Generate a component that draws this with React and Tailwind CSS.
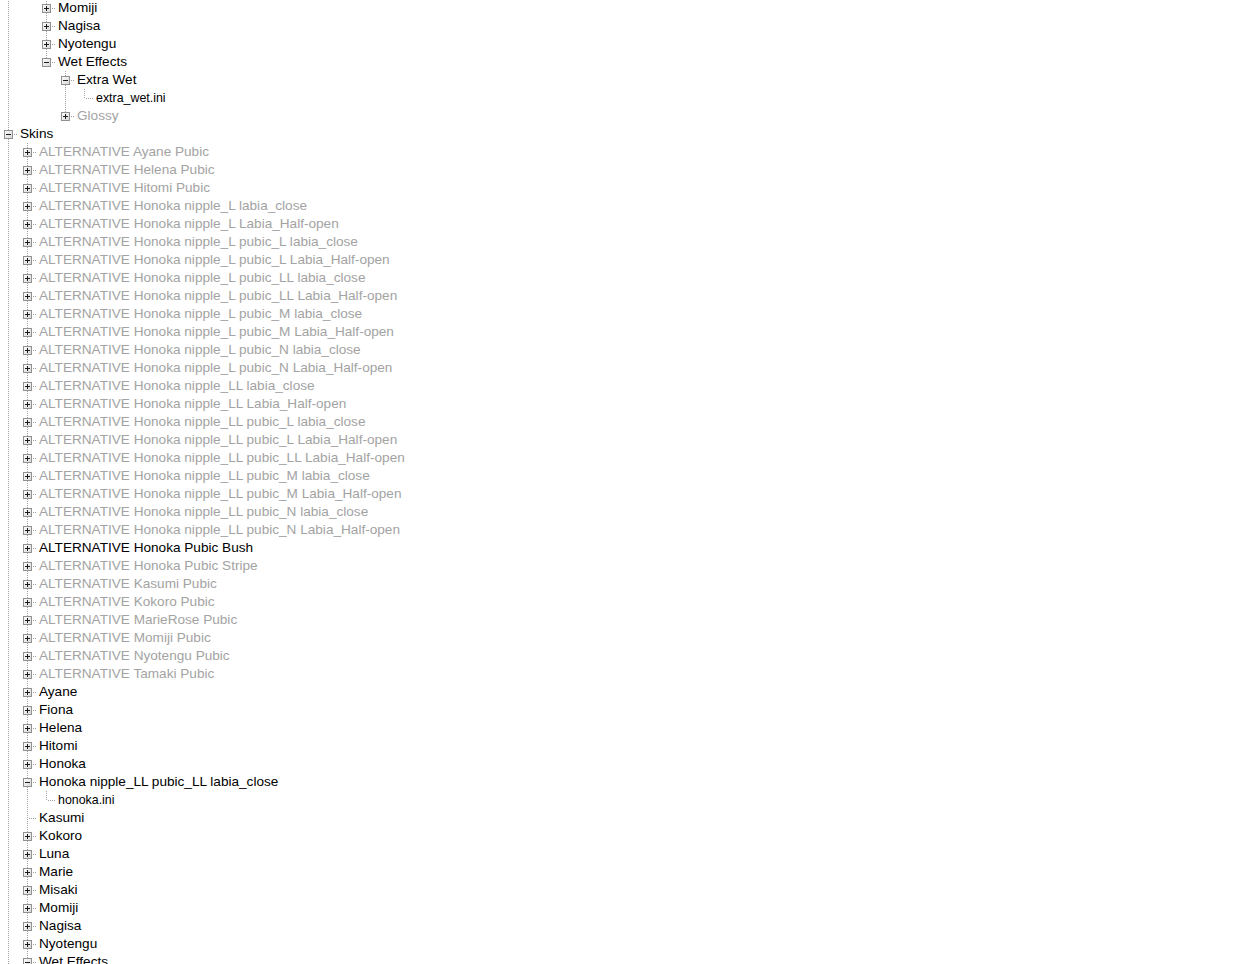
import React from "react";

const P = (l, b, t, g = false, ini = false, hidden = false) => ({ l, b, t, g, ini, hidden });

const alt = [
  "Ayane Pubic",
  "Helena Pubic",
  "Hitomi Pubic",
  "Honoka nipple_L labia_close",
  "Honoka nipple_L Labia_Half-open",
  "Honoka nipple_L pubic_L labia_close",
  "Honoka nipple_L pubic_L Labia_Half-open",
  "Honoka nipple_L pubic_LL labia_close",
  "Honoka nipple_L pubic_LL Labia_Half-open",
  "Honoka nipple_L pubic_M labia_close",
  "Honoka nipple_L pubic_M Labia_Half-open",
  "Honoka nipple_L pubic_N labia_close",
  "Honoka nipple_L pubic_N Labia_Half-open",
  "Honoka nipple_LL labia_close",
  "Honoka nipple_LL Labia_Half-open",
  "Honoka nipple_LL pubic_L labia_close",
  "Honoka nipple_LL pubic_L Labia_Half-open",
  "Honoka nipple_LL pubic_LL Labia_Half-open",
  "Honoka nipple_LL pubic_M labia_close",
  "Honoka nipple_LL pubic_M Labia_Half-open",
  "Honoka nipple_LL pubic_N labia_close",
  "Honoka nipple_LL pubic_N Labia_Half-open",
];

const rows = [
  P(0, null, "", false, false, true),
  P(1, null, "", false, false, true),
  P(2, null, "", false, false, true),
  P(2, "+", "Momiji"),
  P(2, "+", "Nagisa"),
  P(2, "+", "Nyotengu"),
  P(2, "-", "Wet Effects"),
  P(3, "-", "Extra Wet"),
  P(4, null, "extra_wet.ini", false, true),
  P(3, "+", "Glossy", true),
  P(0, "-", "Skins"),
  ...alt.map((a) => P(1, "+", "ALTERNATIVE " + a, true)),
  P(1, "+", "ALTERNATIVE Honoka Pubic Bush"),
  P(1, "+", "ALTERNATIVE Honoka Pubic Stripe", true),
  P(1, "+", "ALTERNATIVE Kasumi Pubic", true),
  P(1, "+", "ALTERNATIVE Kokoro Pubic", true),
  P(1, "+", "ALTERNATIVE MarieRose Pubic", true),
  P(1, "+", "ALTERNATIVE Momiji Pubic", true),
  P(1, "+", "ALTERNATIVE Nyotengu Pubic", true),
  P(1, "+", "ALTERNATIVE Tamaki Pubic", true),
  P(1, "+", "Ayane"),
  P(1, "+", "Fiona"),
  P(1, "+", "Helena"),
  P(1, "+", "Hitomi"),
  P(1, "+", "Honoka"),
  P(1, "-", "Honoka nipple_LL pubic_LL labia_close"),
  P(2, null, "honoka.ini", false, true),
  P(1, null, "Kasumi"),
  P(1, "+", "Kokoro"),
  P(1, "+", "Luna"),
  P(1, "+", "Marie"),
  P(1, "+", "Misaki"),
  P(1, "+", "Momiji"),
  P(1, "+", "Nagisa"),
  P(1, "+", "Nyotengu"),
  P(1, "-", "Wet Effects"),
];

rows.forEach((r, i) => {
  let next = true;
  for (let j = i + 1; j < rows.length; j++) {
    if (rows[j].l < r.l) { next = false; break; }
    if (rows[j].l === r.l) { next = true; break; }
  }
  r.next = next;
});
const stack = [];
rows.forEach((r) => {
  r.anc = stack.slice(0, r.l);
  stack[r.l] = r.next;
  stack.length = r.l + 1;
});

const LINE = "#a0a0a0";

function Pipe({ on }) {
  return (
    <svg width="19" height="18" className="block shrink-0" shapeRendering="crispEdges">
      {on && <line x1="8.5" y1="0" x2="8.5" y2="18" stroke={LINE} strokeDasharray="1 1" />}
    </svg>
  );
}

function Own({ next, box, id }) {
  return (
    <svg width="19" height="18" className="block shrink-0" shapeRendering="crispEdges">
      <defs>
        <linearGradient id={"g" + id} x1="0" y1="0" x2="1" y2="1">
          <stop offset="0" stopColor="#ffffff" />
          <stop offset="1" stopColor="#d6d6d6" />
        </linearGradient>
      </defs>
      <line x1="8.5" y1="0" x2="8.5" y2={next ? 18 : 9} stroke={LINE} strokeDasharray="1 1" />
      <line x1="10" y1="9.5" x2="18" y2="9.5" stroke={LINE} strokeDasharray="1 1" />
      {box && (
        <g>
          <rect x="4.5" y="5.5" width="8" height="8" fill={"url(#g" + id + ")"} stroke="#919191" />
          <line x1="6" y1="9.5" x2="11" y2="9.5" stroke="#1a1a1a" />
          {box === "+" && <line x1="8.5" y1="7" x2="8.5" y2="12" stroke="#1a1a1a" />}
        </g>
      )}
    </svg>
  );
}

export default function App() {
  return (
    <div className="w-[1238px] h-[964px] overflow-hidden bg-white">
      <div className="-mt-[1px] flex flex-col">
        {rows.map((r, i) =>
          r.hidden ? null : (
            <div key={i} className="flex h-[18px] items-stretch">
              {r.anc.map((on, d) => (
                <Pipe key={d} on={on} />
              ))}
              <Own next={r.next} box={r.b} id={i} />
              <span
                className={
                  "whitespace-nowrap pl-px leading-[18px] " +
                  (r.ini ? "text-[12.4px] " : "text-[13.6px] ") +
                  (r.g ? "text-[#a3a3a3]" : "text-black")
                }
                style={{ fontFamily: '"Liberation Sans", Arial, sans-serif' }}
              >
                {r.t}
              </span>
            </div>
          )
        )}
      </div>
    </div>
  );
}
